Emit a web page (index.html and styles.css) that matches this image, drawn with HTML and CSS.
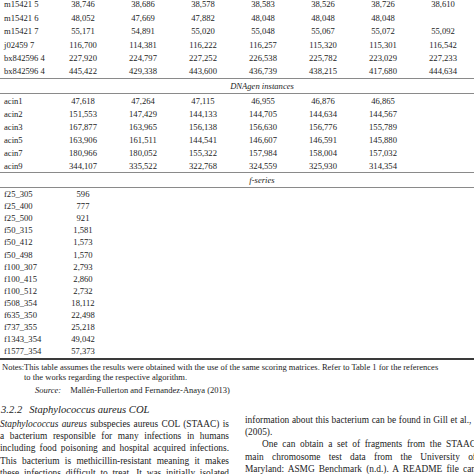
FILE: index.html
```html
<!DOCTYPE html>
<html>
<head>
<meta charset="utf-8">
<link rel="stylesheet" href="styles.css">
</head>
<body>
<div class="page">
  <table class="results">
    <colgroup>
      <col class="c-label"><col class="c-num"><col class="c-num"><col class="c-num"><col class="c-num"><col class="c-num"><col class="c-num"><col class="c-num"><col class="c-last">
    </colgroup>
    <tbody class="sec sec-a">
      <tr><td>m15421 5</td><td>38,746</td><td>38,686</td><td>38,578</td><td>38,583</td><td>38,526</td><td>38,726</td><td>38,610</td><td></td></tr>
      <tr><td>m15421 6</td><td>48,052</td><td>47,669</td><td>47,882</td><td>48,048</td><td>48,048</td><td>48,048</td><td></td><td></td></tr>
      <tr><td>m15421 7</td><td>55,171</td><td>54,891</td><td>55,020</td><td>55,048</td><td>55,067</td><td>55,072</td><td>55,092</td><td></td></tr>
      <tr><td>j02459 7</td><td>116,700</td><td>114,381</td><td>116,222</td><td>116,257</td><td>115,320</td><td>115,301</td><td>116,542</td><td></td></tr>
      <tr><td>bx842596 4</td><td>227,920</td><td>224,797</td><td>227,252</td><td>226,538</td><td>225,782</td><td>223,029</td><td>227,233</td><td></td></tr>
      <tr><td>bx842596 4</td><td>445,422</td><td>429,338</td><td>443,600</td><td>436,739</td><td>438,215</td><td>417,680</td><td>444,634</td><td></td></tr>
    </tbody>
    <tbody class="sec-title">
      <tr><td colspan="9">DNAgen instances</td></tr>
    </tbody>
    <tbody class="sec sec-b">
      <tr><td>acin1</td><td>47,618</td><td>47,264</td><td>47,115</td><td>46,955</td><td>46,876</td><td>46,865</td><td></td><td></td></tr>
      <tr><td>acin2</td><td>151,553</td><td>147,429</td><td>144,133</td><td>144,705</td><td>144,634</td><td>144,567</td><td></td><td></td></tr>
      <tr><td>acin3</td><td>167,877</td><td>163,965</td><td>156,138</td><td>156,630</td><td>156,776</td><td>155,789</td><td></td><td></td></tr>
      <tr><td>acin5</td><td>163,906</td><td>161,511</td><td>144,541</td><td>146,607</td><td>146,591</td><td>145,880</td><td></td><td></td></tr>
      <tr><td>acin7</td><td>180,966</td><td>180,052</td><td>155,322</td><td>157,984</td><td>158,004</td><td>157,032</td><td></td><td></td></tr>
      <tr><td>acin9</td><td>344,107</td><td>335,522</td><td>322,768</td><td>324,559</td><td>325,930</td><td>314,354</td><td></td><td></td></tr>
    </tbody>
    <tbody class="sec-title">
      <tr><td colspan="9">f-series</td></tr>
    </tbody>
    <tbody class="sec sec-c">
      <tr><td>f25_305</td><td>596</td><td></td><td></td><td></td><td></td><td></td><td></td><td></td></tr>
      <tr><td>f25_400</td><td>777</td><td></td><td></td><td></td><td></td><td></td><td></td><td></td></tr>
      <tr><td>f25_500</td><td>921</td><td></td><td></td><td></td><td></td><td></td><td></td><td></td></tr>
      <tr><td>f50_315</td><td>1,581</td><td></td><td></td><td></td><td></td><td></td><td></td><td></td></tr>
      <tr><td>f50_412</td><td>1,573</td><td></td><td></td><td></td><td></td><td></td><td></td><td></td></tr>
      <tr><td>f50_498</td><td>1,570</td><td></td><td></td><td></td><td></td><td></td><td></td><td></td></tr>
      <tr><td>f100_307</td><td>2,793</td><td></td><td></td><td></td><td></td><td></td><td></td><td></td></tr>
      <tr><td>f100_415</td><td>2,860</td><td></td><td></td><td></td><td></td><td></td><td></td><td></td></tr>
      <tr><td>f100_512</td><td>2,732</td><td></td><td></td><td></td><td></td><td></td><td></td><td></td></tr>
      <tr><td>f508_354</td><td>18,112</td><td></td><td></td><td></td><td></td><td></td><td></td><td></td></tr>
      <tr><td>f635_350</td><td>22,498</td><td></td><td></td><td></td><td></td><td></td><td></td><td></td></tr>
      <tr><td>f737_355</td><td>25,218</td><td></td><td></td><td></td><td></td><td></td><td></td><td></td></tr>
      <tr><td>f1343_354</td><td>49,042</td><td></td><td></td><td></td><td></td><td></td><td></td><td></td></tr>
      <tr><td>f1577_354</td><td>57,373</td><td></td><td></td><td></td><td></td><td></td><td></td><td></td></tr>
    </tbody>
  </table>

  <div class="notes">
    <div class="note-row"><span class="note-label">Notes:</span><span class="note-text">This table assumes the results were obtained with the use of the same scoring matrices. Refer to Table 1 for the references<br>to the works regarding the respective algorithm.</span></div>
    <div class="source"><span class="source-label">Source:</span>Mallén-Fullerton and Fernandez-Anaya (2013)</div>
  </div>

  <div class="columns">
    <div class="col col-left">
      <h3 class="sub-heading"><span class="sub-num">3.2.2</span>Staphylococcus aureus COL</h3>
      <p class="body-text">
        <span class="ln"><em>Staphylococcus aureus</em> subspecies aureus COL (STAAC) is</span>
        <span class="ln">a bacterium responsible for many infections in humans</span>
        <span class="ln">including food poisoning and hospital acquired infections.</span>
        <span class="ln">This bacterium is methicillin-resistant meaning it makes</span>
        <span class="ln">these infections difficult to treat. It was initially isolated</span>
      </p>
    </div>
    <div class="col col-right">
      <p class="body-text">
        <span class="ln ln-first">information about this bacterium can be found in Gill et al.,</span>
        <span class="ln ln-end">(2005).</span>
      </p>
      <p class="body-text">
        <span class="ln ln-indent">One can obtain a set of fragments from the STAAC</span>
        <span class="ln">main chromosome test data from the University of</span>
        <span class="ln">Maryland: ASMG Benchmark (n.d.). A README file can</span>
        <span class="ln">also be found that gives some details about the files</span>
      </p>
    </div>
  </div>
</div>
</body>
</html>
```

FILE: styles.css
```css
html, body {
  margin: 0;
  padding: 0;
  background: #ffffff;
}

body {
  width: 474px;
  height: 474px;
  overflow: hidden;
  font-family: "Liberation Serif", "Times New Roman", serif;
  color: #1c1c1c;
}

.page {
  width: 474px;
  overflow: hidden;
}

.results {
  width: 524px;
  table-layout: fixed;
  border-collapse: collapse;
  margin-top: -2px;
  font-size: 8.6px;
  line-height: 1;
}

.c-label { width: 53px; }
.c-num { width: 60px; }
.c-last { width: 51px; }

.results td {
  padding: 0;
  text-align: center;
  white-space: nowrap;
}

.results td:first-child {
  text-align: left;
  padding-left: 4px;
}

.sec-a td { height: 13.4px; }
.sec-b td { height: 13px; }
.sec-c td { height: 12.1px; }

.sec-a,
.sec-b {
  border-bottom: 1px solid #8a8a8a;
}

.sec-title td {
  height: 14px;
  font-style: italic;
  text-align: center !important;
  padding-left: 0 !important;
  border-bottom: 1px solid #8a8a8a;
}

.sec-c {
  border-bottom: 2px solid #3a3a3a;
}

.notes {
  margin-top: 2px;
  font-size: 8.5px;
  line-height: 10px;
}

.note-row {
  display: flex;
  padding-left: 2px;
}

.note-label {
  width: 22px;
  flex: none;
}

.source {
  margin-top: 3px;
  padding-left: 35px;
}

.source-label {
  font-style: italic;
  margin-right: 9px;
}

.columns {
  display: grid;
  grid-template-columns: 229px 231px;
  column-gap: 16px;
  margin-top: 8px;
  align-items: start;
}

.sub-heading {
  margin: 0 0 1px;
  padding-left: 1px;
  font-size: 10.6px;
  line-height: 14px;
  font-weight: normal;
  font-style: italic;
}

.sub-num {
  margin-right: 7px;
}

.body-text {
  margin: 0;
  font-size: 9.4px;
  line-height: 12.3px;
}

.ln {
  display: block;
  white-space: nowrap;
  text-align: justify;
  text-align-last: justify;
}

.ln-first {
  text-align: left;
  text-align-last: left;
  word-spacing: 0.3px;
}

.ln-end {
  text-align: left;
  text-align-last: left;
}

.ln-indent {
  padding-left: 17px;
}

.col-right {
  padding-top: 11px;
}
```
